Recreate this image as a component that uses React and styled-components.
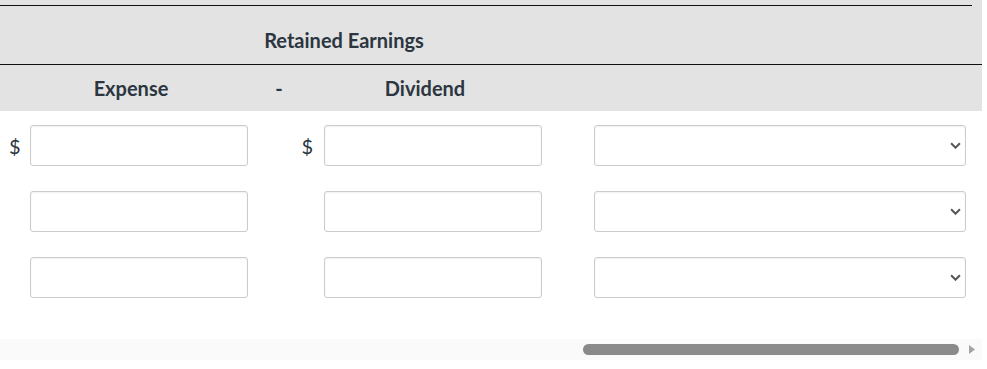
import React from "react";
import styled, { createGlobalStyle } from "styled-components";

const rows = [
    { dollar: true },
    { dollar: false },
    { dollar: false },
];

const App = () => {
    return (
        <>
            <GlobalStyle />
            <Wrapper>
                <Cabecalho>
                    <TituloLinha>
                        <TituloCelula>Retained Earnings</TituloCelula>
                    </TituloLinha>
                    <SubLinha>
                        <SubCelula>Expense</SubCelula>
                        <SubCelula>-</SubCelula>
                        <SubCelula>Dividend</SubCelula>
                    </SubLinha>
                </Cabecalho>
                <Corpo>
                    {rows.map((r, i) => (
                        <Linha key={i}>
                            <Simbolo>{r.dollar ? "$" : ""}</Simbolo>
                            <Campo type="text" />
                            <Simbolo $right>{r.dollar ? "$" : ""}</Simbolo>
                            <Campo type="text" />
                            <span />
                            <SelectBox>
                                <Select defaultValue="">
                                    <option value=""></option>
                                </Select>
                                <Chevron viewBox="0 0 10 6">
                                    <polyline
                                        points="1,1 5,5 9,1"
                                        fill="none"
                                        stroke="#555"
                                        strokeWidth="1.8"
                                    />
                                </Chevron>
                            </SelectBox>
                        </Linha>
                    ))}
                </Corpo>
                <Scrollbar>
                    <Thumb />
                    <Seta viewBox="0 0 6 9">
                        <polygon points="0,0 6,4.5 0,9" fill="#a3a3a3" />
                    </Seta>
                </Scrollbar>
            </Wrapper>
        </>
    );
};

export default App;

const GlobalStyle = createGlobalStyle`
    body {
        margin: 0;
        background: #fff;
        font-family: Lato, "Liberation Sans", sans-serif;
        color: #2b3640;
    }
`;

const Wrapper = styled.div`
    width: 982px;
`;

const Cabecalho = styled.div`
    background: #e3e3e3;
    padding-top: 5px;
`;

const TituloLinha = styled.div`
    width: 972px;
    border-top: 1px solid #111;
    border-bottom: 1px solid #111;
    margin-right: 10px;
    height: 58px;
    box-sizing: content-box;
    position: relative;
    &::after {
        content: "";
        position: absolute;
        left: 0;
        bottom: -1px;
        width: 982px;
        border-bottom: 1px solid #111;
    }
`;

const TituloCelula = styled.div`
    width: 688px;
    text-align: center;
    font-weight: 700;
    font-size: 20px;
    line-height: 24px;
    padding-top: 22px;
`;

const SubLinha = styled.div`
    display: grid;
    grid-template-columns: 262px 34px 258px;
    height: 46px;
    align-items: center;
`;

const SubCelula = styled.div`
    text-align: center;
    font-weight: 700;
    font-size: 20px;
    line-height: 24px;
    padding-bottom: 1px;
`;

const Corpo = styled.div`
    display: flex;
    flex-direction: column;
    gap: 26px;
    padding: 14px 0 42px;
`;

const Linha = styled.div`
    display: grid;
    grid-template-columns: 30px 218px 76px 218px 52px 372px;
    height: 40px;
    align-items: center;
`;

const Simbolo = styled.span`
    font-size: 20px;
    line-height: 24px;
    text-align: ${(p) => (p.$right ? "right" : "left")};
    padding-left: ${(p) => (p.$right ? "0" : "9px")};
    padding-right: ${(p) => (p.$right ? "11px" : "0")};
    color: #2b3640;
`;

const Campo = styled.input`
    box-sizing: border-box;
    height: 41px;
    width: 218px;
    border: 1px solid #cbcbcb;
    border-radius: 3px;
    box-shadow: inset 0 1px 2px rgba(0, 0, 0, 0.06);
    background: #fff;
    margin: 0;
`;

const SelectBox = styled.div`
    position: relative;
    width: 372px;
    height: 41px;
`;

const Select = styled.select`
    appearance: none;
    box-sizing: border-box;
    width: 100%;
    height: 100%;
    border: 1px solid #cbcbcb;
    border-radius: 3px;
    box-shadow: inset 0 1px 2px rgba(0, 0, 0, 0.06);
    background: #fff;
    margin: 0;
`;

const Chevron = styled.svg`
    position: absolute;
    right: 5px;
    top: 17px;
    width: 11px;
    height: 7px;
    pointer-events: none;
`;

const Scrollbar = styled.div`
    background: #fafafa;
    height: 21px;
    display: flex;
    align-items: center;
    justify-content: flex-end;
    padding-right: 7px;
    gap: 10px;
`;

const Thumb = styled.div`
    width: 376px;
    height: 11px;
    border-radius: 6px;
    background: #8a8a8a;
`;

const Seta = styled.svg`
    width: 6px;
    height: 9px;
`;
